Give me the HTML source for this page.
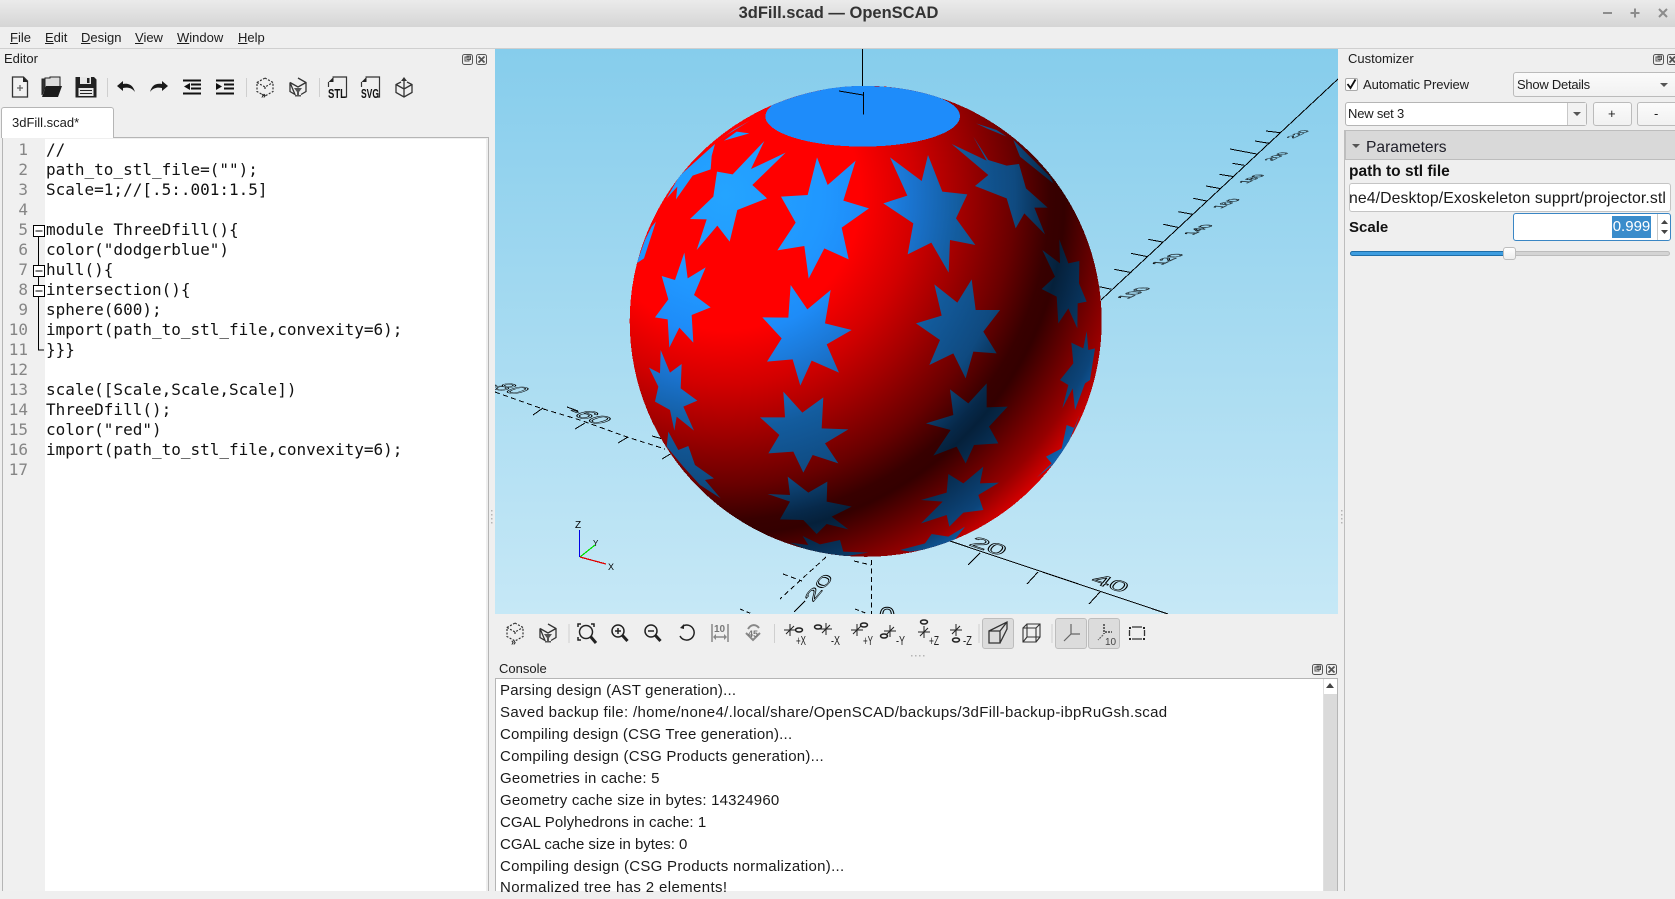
<!DOCTYPE html>
<html><head><meta charset="utf-8"><title>3dFill.scad — OpenSCAD</title>
<style>
html,body{margin:0;padding:0;width:1675px;height:891px;overflow:hidden;background:#efefef;font-family:"Liberation Sans",sans-serif;font-size:13px;color:#1c1c1c}
.a{position:absolute;white-space:pre}
.box{position:absolute;box-sizing:border-box}
#title{left:2px;top:0;width:1673px;height:27px;text-align:center;font-weight:bold;font-size:16.5px;line-height:27px;color:#333}
#tbg{left:0;top:0;width:1675px;height:27px;background:linear-gradient(#ebebeb,#d5d5d5)}
.menu{top:28px;line-height:19px}
.code{font-family:"DejaVu Sans Mono","Liberation Mono",monospace;font-size:16px;line-height:20px;color:#111}
.con{left:500px;font-size:15px;line-height:22px;color:#1a1a1a}
.btn{border:1px solid #bbb;border-radius:3px;background:linear-gradient(#fbfbfb,#f1f1f1)}
</style></head><body>
<div class="box" id="tbg"></div>
<div class="a" id="title">3dFill.scad — OpenSCAD</div>
<div class="box" style="left:0;top:48px;width:1675px;height:1px;background:#cfcfcf"></div>
<div class="a menu" style="left:10px"><u>F</u>ile</div>
<div class="a menu" style="left:45px"><u>E</u>dit</div>
<div class="a menu" style="left:81px"><u>D</u>esign</div>
<div class="a menu" style="left:135px"><u>V</u>iew</div>
<div class="a menu" style="left:177px"><u>W</u>indow</div>
<div class="a menu" style="left:238px"><u>H</u>elp</div>

<!-- editor -->
<div class="a" style="left:4px;top:50px;line-height:18px">Editor</div>
<div class="box" style="left:2px;top:137px;width:487px;height:754px;border:1px solid #b5b5b5;border-bottom:0;background:#efefef"></div>
<div class="box" style="left:3px;top:139px;width:483px;height:752px;background:#fff"></div>
<div class="box" style="left:3px;top:139px;width:42px;height:752px;background:#f0f0f0"></div>
<div class="box" style="left:1px;top:107px;width:113px;height:31px;background:#fff;border:1px solid #b5b5b5;border-bottom:0;border-radius:3px 3px 0 0"></div>
<div class="a" style="left:12px;top:114px;line-height:18px">3dFill.scad*</div>
<div class="a code" style="left:0;top:140px;width:28px;text-align:right;color:#858585">1
2
3
4
5
6
7
8
9
10
11
12
13
14
15
16
17</div>
<div class="a code" style="left:46px;top:140px">//
path_to_stl_file=("");
Scale=1;//[.5:.001:1.5]

module ThreeDfill(){
color("dodgerblue")
hull(){
intersection(){
sphere(600);
import(path_to_stl_file,convexity=6);
}}}

scale([Scale,Scale,Scale])
ThreeDfill();
color("red")
import(path_to_stl_file,convexity=6);
</div>

<!-- viewport -->
<svg style="position:absolute;left:495px;top:49px" width="843" height="565" viewBox="495 49 843 565">
<defs>
<linearGradient id="bg" x1="0" y1="0" x2="0" y2="1"><stop offset="0" stop-color="#86cdec"/><stop offset="1" stop-color="#c6e8f6"/></linearGradient>
<radialGradient id="rd" gradientUnits="userSpaceOnUse" cx="725" cy="195" r="500">
<stop offset="0" stop-color="#ff0000"/><stop offset=".27" stop-color="#ff0000"/><stop offset=".38" stop-color="#d20000"/><stop offset=".47" stop-color="#a40000"/><stop offset=".58" stop-color="#680000"/><stop offset=".65" stop-color="#380000"/><stop offset=".68" stop-color="#340000"/><stop offset=".8" stop-color="#960000"/><stop offset=".87" stop-color="#f00000"/><stop offset="1" stop-color="#ff0000"/>
</radialGradient>
<radialGradient id="bl" gradientUnits="userSpaceOnUse" cx="725" cy="195" r="500">
<stop offset="0" stop-color="#24a4ff"/><stop offset=".2" stop-color="#2097ff"/><stop offset=".28" stop-color="#1e8cf8"/><stop offset=".38" stop-color="#1a72cc"/><stop offset=".47" stop-color="#135c9e"/><stop offset=".58" stop-color="#0f4a80"/><stop offset=".65" stop-color="#07294a"/><stop offset=".68" stop-color="#05203a"/><stop offset=".8" stop-color="#0c4479"/><stop offset=".87" stop-color="#1271c9"/><stop offset="1" stop-color="#1271c9"/>
</radialGradient>
<clipPath id="sph"><ellipse cx="865.7" cy="321.3" rx="236" ry="235.5"/></clipPath>
<clipPath id="stars">
<path transform="translate(620,50) scale(.33333)" d="M591 322L623 405 707 332 670 452 747 475 665 533 686 628 613 595 566 686 553 588 472 601 527 518 483 440 563 435Z
M433 273L393 357 497 308 397 405 441 445 352 480 329 575 292 527 230 600 260 508 210 507 280 440 291 365 338 373Z
M924 315L967 425 1042 433 1008 505 1066 585 990 570 986 668 934 578 863 613 880 520 790 460 862 437 810 322 905 393Z
M1060 260L1105 330 1160 347 1197 342 1218 415 1283 473 1243 473 1275 553 1213 490 1187 535 1160 445 1065 408 1105 375 995 282 1100 332Z
M193 608L203 685 257 652 222 735 272 772 215 795 220 878 178 833 148 893 143 808 105 802 145 748 125 678 165 690Z
M1318 568L1345 640 1378 633 1377 700 1400 755 1373 760 1372 835 1345 775 1315 820 1310 740 1265 717 1305 680 1267 600 1320 640Z
M178 378L285 282 275 318 272 358 218 377 168 448 172 410 140 445Z
M388 250L312 272 350 245Z
M390 212L320 255 285 280 340 240Z
M108 515L95 530 75 570 50 640 72 625Z
M1180 270L1290 380 1300 400 1200 320 1190 295Z
M1068 220L1130 240 1160 260 1100 235Z"/>
<path transform="translate(620,320) scale(.33333)" d="M512 -105L562 -32 632 -90 615 10 695 30 620 73 657 158 575 122 541 197 518 118 441 125 485 55 427 -8 505 -7Z
M1055 -122L1067 -30 1140 -30 1090 35 1130 100 1060 95 1037 175 1000 100 928 135 960 60 888 10 965 -13 943 -107 1012 -52Z
M1400 33L1405 90 1425 85 1410 180 1395 190 1365 270 1358 205 1327 265 1345 195 1320 180 1360 130 1354 68 1390 85Z
M122 90L150 158 185 132 182 205 232 242 190 260 222 332 170 290 163 332 150 270 105 245 115 200 87 143 120 160Z
M490 215L547 278 610 232 605 325 685 328 615 370 655 430 578 405 550 458 520 395 445 400 478 345 420 292 495 292Z
M1100 190L1100 262 1163 260 1107 320 1135 370 1062 375 1037 430 1010 380 940 407 992 330 918 310 1000 285 990 208 1045 250Z
M503 470L565 518 622 485 620 545 695 560 635 590 685 628 620 612 590 642 550 600 480 598 510 545 443 522 510 525Z
M1090 440L1080 490 1137 488 1075 525 1090 570 1030 578 988 620 980 585 903 610 968 545 903 540 980 518 985 462 1030 490Z
M145 335L175 390 205 378 225 435 282 475 255 480 302 535 240 495 190 440 140 380Z
M1378 285L1365 325 1340 315 1325 385 1278 410 1295 430 1250 473 1310 425 1345 370Z
M548 648L600 673 660 660 670 695 745 698 680 708 640 712 600 706 510 668 565 675Z
M1035 620L985 650 935 642 915 670 840 690 870 695 940 685 1000 665Z"/>
</clipPath>
</defs>
<rect x="495" y="49" width="843" height="565" fill="url(#bg)"/>

<g stroke="#000" stroke-width="1" fill="none" shape-rendering="crispEdges">
<path d="M862.5 48V89"/>
<path d="M1101 300L1338 79"/>
<g transform="translate(1060,60) scale(.33333)" stroke-width="3">
<path d="M118 680L155 688M163 628L215 638M213 580L262 590M265 538L307 546M310 493L358 503M355 455L398 463M400 415L440 423M438 378L483 386M478 343L522 350M517 310L553 316M510 267L590 282M585 243L628 250M618 213L660 218"/>
</g>
<path stroke-dasharray="5 3.5" d="M495 392L540 408 580 420 627 437 665 449"/>
<path d="M533 415L543 408M575 429L585 423M618 443L628 437M662 459L672 453M567 407L578 411M652 436L663 439"/>
<path d="M950 541L1168 614M980 553L968 565M1038 572L1027 584M1100 592L1089 604"/>
<path stroke-dasharray="5 3.5" d="M826 557L780 599M871.5 560V614M854 561L871 565M783 574L802 581"/>
<path d="M805 601L794 612"/>
<path stroke-dasharray="4 3" d="M740 609L752 614M855 609L868 614"/>
</g>

<ellipse cx="865.7" cy="321.3" rx="236" ry="235.5" fill="url(#rd)" shape-rendering="crispEdges"/>
<g clip-path="url(#sph)">
<rect x="620" y="80" width="490" height="485" fill="url(#bl)" clip-path="url(#stars)"/>
<ellipse cx="862.7" cy="116.3" rx="97.3" ry="30.3" fill="#1e8cfa" shape-rendering="crispEdges"/>
</g>
<g stroke="#000" fill="none" shape-rendering="crispEdges">
<path d="M863.5 92V114.5M839 91L863 95"/>
</g>

<!-- axis labels -->
<g font-family="Liberation Sans,sans-serif" font-size="10" fill="none" stroke="#000" stroke-width=".5">
<text transform="matrix(1.44,-.68,1.8,.1,1127.7,299)">100</text>
<text transform="matrix(1.38,-.65,1.7,.1,1161.7,265)">120</text>
<text transform="matrix(1.28,-.6,1.5,.1,1192.7,235)">140</text>
<text transform="matrix(1.2,-.56,1.4,.1,1221,208.5)">160</text>
<text transform="matrix(1.12,-.52,1.3,.1,1246.7,183.5)">180</text>
<text transform="matrix(1.05,-.5,1.2,.1,1271.7,161)">200</text>
<text transform="matrix(1,-.47,1.1,.1,1293.3,138.5)">220</text>
</g>
<g font-family="Liberation Sans,sans-serif" font-size="10" fill="none" stroke="#000" stroke-width=".38">
<text transform="matrix(2.3,.9,-2.3,.8,565,412)">-60</text>
<text transform="matrix(2.3,.6,-2.3,.8,483,386)">-80</text>
<text transform="matrix(3,1,-1.1,1.3,968,545)">20</text>
<text transform="matrix(3,1,-1.1,1.3,1090,582)">40</text>
<text transform="matrix(1.9,-2.3,1.4,.6,812.7,602.6)">20</text>
<text transform="matrix(2.9,0,0,2.5,879,625)">0</text>
</g>
<g stroke-width="1.3" fill="none" shape-rendering="crispEdges">
<path stroke="#0000e6" d="M579.5 557V530"/>
<path stroke="#00e000" d="M580 557L595 545"/>
<path stroke="#e00000" d="M580 557L606 564"/>
</g>
<g font-family="Liberation Sans,sans-serif" font-size="10" fill="#000">
<text x="575" y="528">Z</text>
<text x="593" y="546" font-size="8">Y</text>
<text x="608" y="570" font-size="9">X</text>
</g>
</svg>

<div class="box" style="left:982px;top:618px;width:32px;height:31px;background:#dcdcdc;border:1px solid #bdbdbd;border-radius:3px"></div>
<div class="box" style="left:1055px;top:618px;width:32px;height:31px;background:#dcdcdc;border:1px solid #bdbdbd;border-radius:3px"></div>
<div class="box" style="left:1088px;top:618px;width:32px;height:31px;background:#dcdcdc;border:1px solid #bdbdbd;border-radius:3px"></div>

<!-- console -->
<div class="a" style="left:499px;top:660px;line-height:18px">Console</div>
<div class="box" style="left:495px;top:678px;width:843px;height:213px;background:#fff;border:1px solid #b5b5b5;border-bottom:0"></div>
<div class="box" style="left:1323px;top:679px;width:14px;height:212px;background:#fff;border-left:1px solid #e0e0e0"></div>
<div class="box" style="left:1324px;top:694px;width:13px;height:197px;background:#dadada"></div>
<div class="a con" style="top:680px;letter-spacing:.186px">Parsing design (AST generation)...</div>
<div class="a con" style="top:702px;letter-spacing:.327px">Saved backup file: /home/none4/.local/share/OpenSCAD/backups/3dFill-backup-ibpRuGsh.scad</div>
<div class="a con" style="top:724px;letter-spacing:.216px">Compiling design (CSG Tree generation)...</div>
<div class="a con" style="top:746px;letter-spacing:.25px">Compiling design (CSG Products generation)...</div>
<div class="a con" style="top:768px;letter-spacing:.25px">Geometries in cache: 5</div>
<div class="a con" style="top:790px;letter-spacing:.2px">Geometry cache size in bytes: 14324960</div>
<div class="a con" style="top:812px;letter-spacing:.06px">CGAL Polyhedrons in cache: 1</div>
<div class="a con" style="top:834px;letter-spacing:-.02px">CGAL cache size in bytes: 0</div>
<div class="a con" style="top:856px;letter-spacing:.28px">Compiling design (CSG Products normalization)...</div>
<div class="a con" style="top:877px;letter-spacing:.37px">Normalized tree has 2 elements!</div>

<!-- customizer -->
<div class="a" style="left:1348px;top:50px;line-height:18px">Customizer</div>
<div class="box" style="left:1345px;top:78px;width:13px;height:13px;background:#fff;border:1px solid #aaa;border-radius:2px"></div>
<div class="a" style="left:1363px;top:76px;line-height:18px;letter-spacing:-.1px">Automatic Preview</div>
<div class="box btn" style="left:1513px;top:72px;width:170px;height:25px"></div>
<div class="a" style="left:1517px;top:76px;line-height:18px;letter-spacing:-.25px">Show Details</div>
<div class="box" style="left:1345px;top:102px;width:242px;height:24px;background:#fff;border:1px solid #b5b5b5;border-radius:3px"></div>
<div class="box" style="left:1567px;top:103px;width:1px;height:22px;background:#c8c8c8"></div>
<div class="box" style="left:1568px;top:103px;width:18px;height:22px;background:#f2f2f2"></div>
<div class="a" style="left:1348px;top:105px;line-height:18px;letter-spacing:-.2px">New set 3</div>
<div class="box btn" style="left:1593px;top:102px;width:39px;height:24px"></div>
<div class="a" style="left:1608px;top:105px;line-height:18px">+</div>
<div class="box btn" style="left:1637px;top:102px;width:46px;height:24px"></div>
<div class="a" style="left:1654px;top:105px;line-height:18px">-</div>
<div class="box" style="left:1344px;top:130px;width:1px;height:761px;background:#bdbdbd"></div>
<div class="box" style="left:1345px;top:130px;width:335px;height:30px;background:#d9d9d9;border:1px solid #bdbdbd"></div>
<div class="a" style="left:1366px;top:138px;font-size:15.6px;line-height:20px;color:#20202a">Parameters</div>
<div class="a" style="left:1349px;top:163px;font-size:15.5px;font-weight:bold;line-height:18px;color:#111">path to stl file</div>
<div class="box" style="left:1349px;top:183px;width:322px;height:29px;background:#fff;border:1px solid #c4c4c4;border-radius:3px;overflow:hidden"></div>
<div class="a" style="left:1349px;top:189px;font-size:15.8px;letter-spacing:.1px;line-height:20px;color:#1a1a1a">ne4/Desktop/Exoskeleton supprt/projector.stl</div>
<div class="a" style="left:1349px;top:219px;font-size:15px;font-weight:bold;line-height:18px;color:#111">Scale</div>
<div class="box" style="left:1513px;top:213px;width:158px;height:28px;background:#fff;border:1px solid #3a86c4;border-radius:3px"></div>
<div class="box" style="left:1612px;top:216px;width:39px;height:22px;background:#3a8ccb;color:#fff;font-size:15px;line-height:22px;text-align:center">0.999</div>
<div class="box" style="left:1657px;top:214px;width:1px;height:26px;background:#c8c8c8"></div>
<div class="box" style="left:1350px;top:251px;width:320px;height:5px;background:#d4d4d4;border:1px solid #bdbdbd;border-radius:3px"></div>
<div class="box" style="left:1350px;top:251px;width:156px;height:5px;background:#3d9de0;border:1px solid #1f6ea8;border-radius:3px"></div>
<div class="box" style="left:1503px;top:247px;width:13px;height:13px;background:linear-gradient(#fff,#eee);border:1px solid #bdbdbd;border-radius:3px"></div>

<!-- icons overlay -->
<svg style="position:absolute;left:0;top:0;pointer-events:none" width="1675" height="891" viewBox="0 0 1675 891">
<defs>
<g id="cubeP" fill="none" stroke="#333" stroke-width="1.2" stroke-dasharray="2 1.5"><path d="M0-9L8-4.5V4.5L0 9-8 4.5V-4.5ZM-8-4.5L0 0 8-4.5M0 0V3"/></g>
<g id="cubeR" fill="none" stroke="#333" stroke-width="1.3"><path d="M0-9L8-4.5V4.5L3 7.5M-3 7.5L-8 4.5V-4.5ZM-8-4.5L0 0 8-4.5"/><path d="M-4 1H4L1 5V8H3V9.5H-3V8H-1V5Z" fill="#555" stroke="none"/></g>
</defs>

<g stroke="#8c8c8c" stroke-width="2">
<path d="M1603 13H1612M1630.5 13H1639.5M1635 8.500V17.500M1659 9L1667 17M1667 9L1659 17"/>
</g>

<g fill="none" stroke="#555" stroke-width="1">
<rect x="462.500" y="54.500" width="10" height="10" rx="2"/><rect x="465" y="57" width="4" height="4"/><rect x="467" y="56" width="3.500" height="3.500"/>
<rect x="476.500" y="54.500" width="10" height="10" rx="2"/><path d="M478.500 56.500L484.500 62.500M484.500 56.500L478.500 62.500" stroke-width="1.800"/>
<rect x="1312.500" y="664.500" width="10" height="10" rx="2"/><rect x="1315" y="667" width="4" height="4"/><rect x="1317" y="666" width="3.500" height="3.500"/>
<rect x="1326.500" y="664.500" width="10" height="10" rx="2"/><path d="M1328.500 666.500L1334.500 672.500M1334.500 666.500L1328.500 672.500" stroke-width="1.800"/>
<rect x="1653.500" y="54.500" width="10" height="10" rx="2"/><rect x="1656" y="57" width="4" height="4"/><rect x="1658" y="56" width="3.500" height="3.500"/>
<rect x="1667.500" y="54.500" width="10" height="10" rx="2"/><path d="M1669.500 56.500L1675 62.500M1675 56.500L1669.500 62.500" stroke-width="1.800"/>
</g>

<g fill="#b5b5b5">
<rect x="491" y="510" width="1.500" height="1.500"/><rect x="491" y="514" width="1.500" height="1.500"/><rect x="491" y="518" width="1.500" height="1.500"/><rect x="491" y="522" width="1.500" height="1.500"/>
<rect x="1341" y="510" width="1.500" height="1.500"/><rect x="1341" y="514" width="1.500" height="1.500"/><rect x="1341" y="518" width="1.500" height="1.500"/><rect x="1341" y="522" width="1.500" height="1.500"/>
<rect x="911" y="655" width="1.500" height="1.500"/><rect x="915" y="655" width="1.500" height="1.500"/><rect x="919" y="655" width="1.500" height="1.500"/><rect x="923" y="655" width="1.500" height="1.500"/>
</g>

<g fill="#fff" stroke="#000" stroke-width="1" shape-rendering="crispEdges">
<path d="M38.500 236V350H44" fill="none"/>
<rect x="33.500" y="225.500" width="11" height="11"/><path d="M35.500 231H42.500"/>
<rect x="33.500" y="265.500" width="11" height="11"/><path d="M35.500 271H42.500"/>
<rect x="33.500" y="285.500" width="11" height="11"/><path d="M35.500 291H42.500"/>
</g>

<g stroke="#cfcfcf"><path d="M107.500 78V97M246.500 78V97M319.500 78V97M774.500 624V643M569 624V643M979 624V643M1052 624V643"/></g>
<g transform="translate(20,87)"><path d="M-7.500-10H3.500L7.500-6V10H-7.500Z" fill="#f2f2f2" stroke="#333" stroke-width="1.300"/><path d="M3-10L8-5H3Z" fill="#222"/><path d="M0-2V4M-3 1H3" stroke="#666" stroke-width="1.300"/></g>
<g transform="translate(52,87)"><path d="M-10-8H-4L-2-6H6V-2H-6L-10 8Z" fill="#333" stroke="#222"/><path d="M-7-9H-2V-10H8V1H-7Z" fill="#ddd" stroke="#222"/><path d="M-6-1H10L6 10H-10Z" fill="#1c1c1c"/></g>
<g transform="translate(86,87)"><path d="M-10.500-10H8L10.500-7.500V10.500H-10.500Z" fill="#222"/><rect x="-6" y="-10" width="11" height="7" fill="#e8e8e8"/><rect x="1" y="-9" width="2.500" height="5" fill="#222"/><rect x="-7.500" y="1" width="15" height="8" fill="#e8e8e8"/><path d="M-6 3.500H6M-6 6.500H6" stroke="#222"/></g>
<g transform="translate(126,87)"><path d="M-9-1L-3-6V-3C3-4 7-2 9 5 6 1 2 0-3 1V4Z" fill="#1a1a1a"/></g>
<g transform="translate(159,87)"><path d="M9-1L3-6V-3C-3-4-7-2-9 5-6 1-2 0 3 1V4Z" fill="#1a1a1a"/></g>
<g transform="translate(192,87)" stroke="#111" stroke-width="2"><path d="M-9-6.500H9M-1-2.500H9M-1 1.500H9M-9 6.500H9"/><path d="M-8-.5L-2-4V3Z" fill="#111" stroke="none"/></g>
<g transform="translate(225,87)" stroke="#111" stroke-width="2"><path d="M-9-6.500H9M-1-2.500H9M-1 1.500H9M-9 6.500H9"/><path d="M-2-.5L-8-4V3Z" transform="translate(-1,0)" fill="#111" stroke="none"/></g>
<use href="#cubeP" x="265" y="87"/><text x="261" y="98" font-size="9" font-weight="bold" fill="#222">»</text>
<use href="#cubeR" x="298" y="87"/>
<g transform="translate(337.500,87)"><path d="M-5-10H9V10H7" fill="none" stroke="#333" stroke-width="1.200"/><path d="M-9-5L-4-10V-5Z" fill="#222"/><path d="M-9-5V0" stroke="#333" stroke-width="1.200"/></g>
<text x="328" y="98" font-size="12.500" font-weight="bold" fill="#111" textLength="18" lengthAdjust="spacingAndGlyphs">STL</text>
<g transform="translate(370.500,87)"><path d="M-5-10H9V10H7" fill="none" stroke="#333" stroke-width="1.200"/><path d="M-9-5L-4-10V-5Z" fill="#222"/><path d="M-9-5V0" stroke="#333" stroke-width="1.200"/></g>
<text x="361" y="98" font-size="12.500" font-weight="bold" fill="#111" textLength="18" lengthAdjust="spacingAndGlyphs">SVG</text>
<g transform="translate(404,88)" fill="none" stroke="#333" stroke-width="1.300"><path d="M-3-6L-8-3.500V4.500L0 9 8 4.500V-3.500L3-6M-8-3.500L0 1 8-3.500M0 1V9M0 1V-8"/><path d="M-3-7L0-11 3-7Z" fill="#333" stroke="none"/></g>

<use href="#cubeP" x="515" y="632"/><text x="511" y="645" font-size="9" font-weight="bold" fill="#222">»</text>
<use href="#cubeR" x="548" y="633"/>
<g transform="translate(586,632)" fill="none" stroke="#222" stroke-width="1.500"><path d="M-8-5V-8H-5M5-8H8V-5M-8 5V8H-5"/><circle cx="0" cy="0" r="6.500"/><path d="M4.500 4.500L10 11" stroke-width="3"/></g>
<g transform="translate(618,631)" fill="none" stroke="#222" stroke-width="1.500"><circle cx="0" cy="0" r="6"/><path d="M-3 0H3M0-3V3"/><path d="M4.500 4.500L9.500 10" stroke-width="3"/></g>
<g transform="translate(651,631)" fill="none" stroke="#222" stroke-width="1.500"><circle cx="0" cy="0" r="6"/><path d="M-3 0H3"/><path d="M4.500 4.500L9.500 10" stroke-width="3"/></g>
<g transform="translate(687,633)" fill="none" stroke="#222" stroke-width="1.500"><path d="M-4-7A7.500 7.500 0 1 1-7 3"/><path d="M-7-5L-3-9V-4Z" fill="#222" stroke="none"/></g>
<g transform="translate(720,633)" fill="none" stroke="#888" stroke-width="1.500"><path d="M-8-9V9M8-9V9M-6 4H6"/><path d="M-7 4L-4 1V7ZM7 4L4 1V7Z" fill="#888" stroke="none"/></g>
<text x="714" y="632" font-size="10" font-weight="bold" fill="#777">10</text>
<g transform="translate(753,632)" fill="none" stroke="#888" stroke-width="2"><path d="M-7 1L0 8 7 1M-5-3C-2-8 3-8 6-4"/></g>
<text x="748" y="637" font-size="9" font-weight="bold" fill="#777">45</text>

<g fill="none" stroke="#222" stroke-width="1">
<g transform="translate(790,630)"><path d="M-6 0H6M0-6V6M-4 4L4-4"/><ellipse cx="9" cy="0" rx="3.500" ry="2" stroke-width="1.500"/></g>
<g transform="translate(826,629)"><path d="M-6 0H6M0-6V6M-4 4L4-4"/><ellipse cx="-8" cy="-2" rx="3.500" ry="2" stroke-width="1.500"/></g>
<g transform="translate(857,630)"><path d="M-6 0H6M0-6V6M-4 4L4-4"/><ellipse cx="7" cy="-5" rx="3.500" ry="2" stroke-width="1.500"/></g>
<g transform="translate(890,631)"><path d="M-6 0H6M0-6V6M-4 4L4-4"/><ellipse cx="-6" cy="5" rx="3.500" ry="2" stroke-width="1.500"/></g>
<g transform="translate(924,632)"><path d="M-6 0H6M0-6V6M-4 4L4-4"/><ellipse cx="0" cy="-10" rx="3.500" ry="2" stroke-width="1.500"/></g>
<g transform="translate(956,630)"><path d="M-6 0H6M0-6V6M-4 4L4-4"/><ellipse cx="0" cy="10" rx="3.500" ry="2" stroke-width="1.500"/></g>
</g>
<g font-size="12.500" fill="#222" font-family="Liberation Sans,sans-serif">
<text x="796" y="645" textLength="10" lengthAdjust="spacingAndGlyphs">+X</text>
<text x="831" y="645" textLength="9" lengthAdjust="spacingAndGlyphs">-X</text>
<text x="863" y="645" textLength="10" lengthAdjust="spacingAndGlyphs">+Y</text>
<text x="896" y="645" textLength="9" lengthAdjust="spacingAndGlyphs">-Y</text>
<text x="929" y="645" textLength="10" lengthAdjust="spacingAndGlyphs">+Z</text>
<text x="963" y="645" textLength="9" lengthAdjust="spacingAndGlyphs">-Z</text>
</g>

<g fill="none" stroke="#333" stroke-width="1.300">
<path d="M989 631H1000V643H989ZM989 631L1007 622V629L1000 643M1000 631L1007 622"/>
<path d="M1023 628H1036V642H1023ZM1027 624H1040V637H1027ZM1023 628L1027 624M1036 628L1040 624M1023 642L1027 637M1036 642L1040 637" stroke-width="1.100"/>
</g>
<g fill="none" stroke="#666" stroke-width="1.200">
<path d="M1071 624V634M1071 634H1080M1071 634L1064 641"/>
<path d="M1104 624V634" stroke-dasharray="2 1" stroke-width="2"/><path d="M1103 635L1098 640" stroke-dasharray="2 1"/><path d="M1105 632H1112" stroke-dasharray="2 1" stroke-width="2"/>
</g>
<text x="1105" y="645" font-size="10" fill="#444">10</text>
<g fill="none" stroke="#333" stroke-width="1.300">
<path d="M1132 627H1142M1132 639H1142M1129.500 630V636M1144.500 630V636"/>
</g>
<g fill="#222"><rect x="1129" y="627" width="2" height="2"/><rect x="1143" y="627" width="2" height="2"/><rect x="1129" y="638" width="2" height="2"/><rect x="1143" y="638" width="2" height="2"/></g>

<path d="M1326 688L1330 683 1334 688Z" fill="#444"/>

<path d="M1347.500 84L1350.500 88 1355.500 79.500" fill="none" stroke="#111" stroke-width="1.800"/>
<path d="M1660 83H1668L1664 87Z" fill="#555"/>
<path d="M1573 112H1581L1577 116Z" fill="#555"/>
<path d="M1352 144H1360L1356 148Z" fill="#555"/>
<path d="M1661 224L1664.500 220 1668 224ZM1661 230L1664.500 234 1668 230Z" fill="#444"/>
</svg>
</body></html>
